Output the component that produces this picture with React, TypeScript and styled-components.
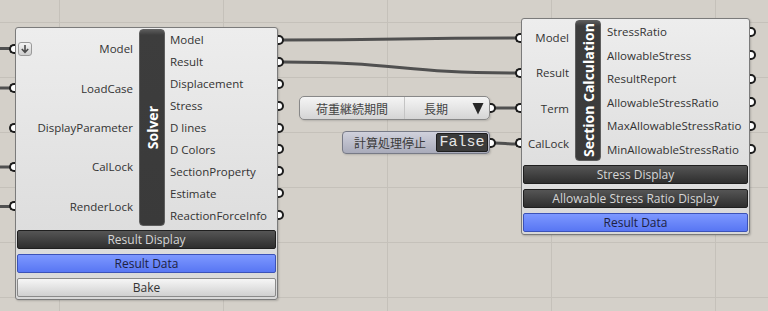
import React from 'react';
import styled, { createGlobalStyle } from 'styled-components';

const GlobalStyle = createGlobalStyle`
  html, body {
    margin: 0;
    padding: 0;
  }
  body {
    width: 768px;
    height: 311px;
    overflow: hidden;
    background: #d4d0c9;
  }
`;

const Canvas = styled.div`
  position: relative;
  width: 768px;
  height: 311px;
  overflow: hidden;
  background-color: #d4d0c9;
  background-image:
    linear-gradient(to right, #c5c1ba 1px, transparent 1px),
    linear-gradient(to bottom, #c5c1ba 1px, transparent 1px);
  background-size: 164px 55px;
  background-position: 59px 22px;
  font-family: "Open Sans", "Noto Sans", sans-serif;
  color: #333;
`;

const Wires = styled.svg`
  position: absolute;
  left: 0;
  top: 0;
  width: 768px;
  height: 311px;
`;

const Node = styled.div<{ $x: number; $y: number; $w: number }>`
  position: absolute;
  left: ${(p) => p.$x}px;
  top: ${(p) => p.$y}px;
  width: ${(p) => p.$w}px;
  box-sizing: border-box;
  border: 1px solid #7b7b7b;
  border-radius: 3px;
  background: linear-gradient(#ededed, #d8d8d8);
  padding: 1px 1px 2px;
  display: flex;
  flex-direction: column;
  gap: 4px;
  box-shadow: 1px 1px 2px rgba(0, 0, 0, 0.18);
`;

const Body = styled.div<{ $in: number; $h: number }>`
  display: grid;
  grid-template-columns: ${(p) => p.$in}px 26px 1fr;
  height: ${(p) => p.$h}px;
`;

const Column = styled.div`
  display: flex;
  flex-direction: column;
`;

const InputRow = styled.div<{ $pad: number }>`
  position: relative;
  flex: 1;
  display: flex;
  align-items: center;
  justify-content: flex-end;
  padding: 0 ${(p) => p.$pad}px 0 1px;
  font-size: 11.5px;
  white-space: nowrap;
`;

const OutputRow = styled.div<{ $pad: number }>`
  position: relative;
  flex: 1;
  display: flex;
  align-items: center;
  padding-left: ${(p) => p.$pad}px;
  font-size: 11.5px;
  white-space: nowrap;
`;

const Socket = styled.span<{ $side: 'in' | 'out' }>`
  position: absolute;
  top: 50%;
  ${(p) => (p.$side === 'in' ? 'left: -8px;' : 'right: -8px;')}
  transform: translateY(-50%);
  width: 4px;
  height: 6px;
  background: #fff;
  border: 2px solid #1c1c1c;
  ${(p) =>
    p.$side === 'in'
      ? 'border-right: none; border-radius: 6px 0 0 6px;'
      : 'border-left: none; border-radius: 0 6px 6px 0;'}
`;

const Bar = styled.div`
  box-sizing: border-box;
  display: flex;
  align-items: center;
  justify-content: center;
  border: 1px solid #5e5e5e;
  border-radius: 4px;
  background: linear-gradient(#5a5a5a 0px, #3d3d3d 5px, #3a3a3a 100%);
  color: #fff;
  overflow: hidden;
`;

const BarLabel = styled.span`
  writing-mode: vertical-rl;
  transform: rotate(180deg);
  font-weight: 700;
  font-size: 14px;
  white-space: nowrap;
`;

const Buttons = styled.div`
  display: flex;
  flex-direction: column;
  gap: 5px;
`;

const variants = {
  dark: `
    background: linear-gradient(#555, #2e2e2e);
    border-color: #1f1f1f;
    color: #d6d6d6;
  `,
  blue: `
    background: linear-gradient(#7d98ff, #5876f3);
    border-color: #3b52b8;
    color: #1d2142;
  `,
  light: `
    background: linear-gradient(#f6f6f6, #d0d0d0);
    border-color: #8a8a8a;
    color: #333;
  `,
};

const Button = styled.div<{ $variant: keyof typeof variants }>`
  box-sizing: border-box;
  height: 19px;
  border: 1px solid;
  border-radius: 2px;
  display: flex;
  align-items: center;
  justify-content: center;
  font-size: 12px;
  ${(p) => variants[p.$variant]}
`;

const IconBox = styled.span`
  margin-right: auto;
  width: 14px;
  height: 14px;
  box-sizing: border-box;
  border: 1px solid #9a9a9a;
  border-radius: 3px;
  background: linear-gradient(#f4f4f4, #cdcdcd);
  display: flex;
  align-items: center;
  justify-content: center;
`;

const ValueList = styled.div`
  position: absolute;
  left: 299px;
  top: 96px;
  width: 191px;
  height: 24px;
  box-sizing: border-box;
  border: 1px solid #888;
  border-radius: 5px;
  background: linear-gradient(#f5f5f5, #d5d5d5);
  display: grid;
  grid-template-columns: 104px 1fr 22px;
  align-items: center;
  font-family: "Noto Sans CJK JP", "Noto Sans", sans-serif;
  font-size: 12px;
  color: #444;
  box-shadow: 1px 1px 2px rgba(0, 0, 0, 0.15);
`;

const Cell = styled.span<{ $divider?: boolean }>`
  display: flex;
  align-items: center;
  justify-content: center;
  height: 100%;
  ${(p) => (p.$divider ? 'border-left: 1px solid #c4c4c4;' : '')}
`;

const Toggle = styled.div`
  position: absolute;
  left: 342px;
  top: 131px;
  width: 148px;
  height: 23px;
  box-sizing: border-box;
  border: 1px solid #777a86;
  border-radius: 4px;
  background: linear-gradient(#d0d1dc, #a9abba);
  display: grid;
  grid-template-columns: 1fr 52px;
  align-items: center;
  padding: 1px;
  font-family: "Noto Sans CJK JP", "Noto Sans", sans-serif;
  font-size: 12px;
  color: #3a3a3a;
  box-shadow: 1px 1px 2px rgba(0, 0, 0, 0.15);
`;

const ToggleLabel = styled.span`
  text-align: center;
`;

const ToggleValue = styled.span`
  height: 19px;
  box-sizing: border-box;
  border: 1px solid #1e1e1e;
  border-radius: 2px;
  background: #3b3b3b;
  color: #e6e6e6;
  font-family: "Liberation Mono", monospace;
  font-size: 15px;
  display: flex;
  align-items: center;
  justify-content: center;
`;

const EdgeSocket = styled(Socket)`
  right: -7px;
`;

type Comp = {
  x: number;
  y: number;
  w: number;
  inW: number;
  h: number;
  inPad: number;
  outPad: number;
  title: string;
  inputs: string[];
  outputs: string[];
  buttons: [string, keyof typeof variants][];
  icon?: boolean;
};

const solver: Comp = {
  x: 15,
  y: 27,
  w: 263,
  inW: 122,
  h: 197,
  inPad: 6,
  outPad: 5,
  title: 'Solver',
  inputs: ['Model', 'LoadCase', 'DisplayParameter', 'CalLock', 'RenderLock'],
  outputs: [
    'Model',
    'Result',
    'Displacement',
    'Stress',
    'D lines',
    'D Colors',
    'SectionProperty',
    'Estimate',
    'ReactionForceInfo',
  ],
  buttons: [
    ['Result Display', 'dark'],
    ['Result Data', 'blue'],
    ['Bake', 'light'],
  ],
  icon: true,
};

const section: Comp = {
  x: 521,
  y: 18,
  w: 229,
  inW: 52,
  h: 141,
  inPad: 6,
  outPad: 6,
  title: 'Section Calculation',
  inputs: ['Model', 'Result', 'Term', 'CalLock'],
  outputs: [
    'StressRatio',
    'AllowableStress',
    'ResultReport',
    'AllowableStressRatio',
    'MaxAllowableStressRatio',
    'MinAllowableStressRatio',
  ],
  buttons: [
    ['Stress Display', 'dark'],
    ['Allowable Stress Ratio Display', 'dark'],
    ['Result Data', 'blue'],
  ],
};

const DownIcon = () => (
  <IconBox>
    <svg width="10" height="10" viewBox="0 0 10 10">
      <path d="M5 1 V8 M1.8 5 L5 8.3 L8.2 5" fill="none" stroke="#4a4a4a" strokeWidth="1.6" />
    </svg>
  </IconBox>
);

const Component = ({ c }: { c: Comp }) => (
  <Node $x={c.x} $y={c.y} $w={c.w}>
    <Body $in={c.inW} $h={c.h}>
      <Column>
        {c.inputs.map((name, i) => (
          <InputRow key={name} $pad={c.inPad}>
            {c.icon && i === 0 && <DownIcon />}
            {name}
            <Socket $side="in" />
          </InputRow>
        ))}
      </Column>
      <Bar>
        <BarLabel>{c.title}</BarLabel>
      </Bar>
      <Column>
        {c.outputs.map((name) => (
          <OutputRow key={name} $pad={c.outPad}>
            {name}
            <Socket $side="out" />
          </OutputRow>
        ))}
      </Column>
    </Body>
    <Buttons>
      {c.buttons.map(([label, v]) => (
        <Button key={label} $variant={v}>
          {label}
        </Button>
      ))}
    </Buttons>
  </Node>
);

const wire = (x1: number, y1: number, x2: number, y2: number) => {
  const d = (x2 - x1) / 2;
  return `M${x1} ${y1} C${x1 + d} ${y1} ${x2 - d} ${y2} ${x2} ${y2}`;
};

const links = [
  [0, 48.5, 10, 48.5],
  [0, 88, 10, 88],
  [0, 167, 10, 167],
  [0, 206.5, 10, 206.5],
  [283, 40, 516, 38],
  [283, 62, 516, 73],
  [495, 108, 516, 108],
  [495, 143, 516, 144],
];

export default function App() {
  return (
    <>
      <GlobalStyle />
      <Canvas>
        <Wires>
          {links.map(([a, b, c, d], i) => (
            <path key={i} d={wire(a, b, c, d)} fill="none" stroke="#505050" strokeWidth="3" />
          ))}
        </Wires>
        <Component c={solver} />
        <Component c={section} />
        <ValueList>
          <Cell>荷重継続期間</Cell>
          <Cell $divider>長期</Cell>
          <Cell>
            <svg width="12" height="13" viewBox="0 0 12 13">
              <path d="M0.5 1 H11.5 L6 12.5 Z" fill="#262626" />
            </svg>
          </Cell>
          <EdgeSocket $side="out" />
        </ValueList>
        <Toggle>
          <ToggleLabel>計算処理停止</ToggleLabel>
          <ToggleValue>False</ToggleValue>
          <EdgeSocket $side="out" />
        </Toggle>
      </Canvas>
    </>
  );
}
